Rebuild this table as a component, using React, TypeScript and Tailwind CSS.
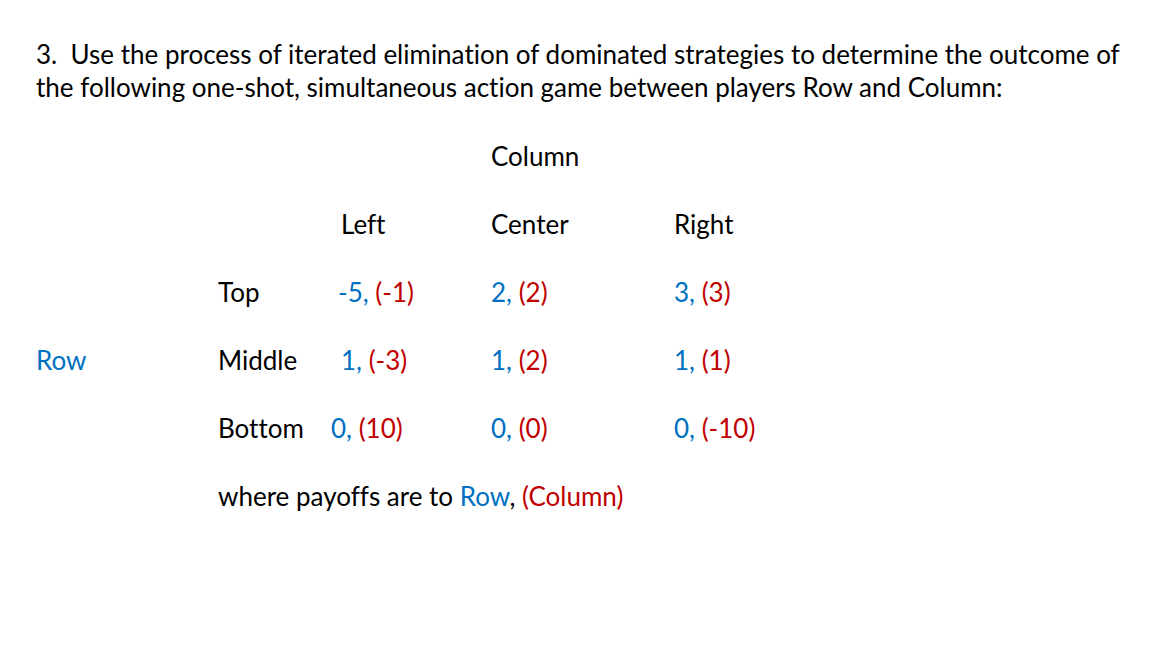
import React from 'react';

const Blue: React.FC<{ children: React.ReactNode }> = ({ children }) => (
  <span className="text-[#0070c0]">{children}</span>
);
const Red: React.FC<{ children: React.ReactNode }> = ({ children }) => (
  <span className="text-[#c00000]">{children}</span>
);

const Payoff: React.FC<{ row: string; col: string; className?: string }> = ({ row, col, className }) => (
  <div className={className}>
    <Blue>{row},</Blue> <Red>({col})</Red>
  </div>
);

const App: React.FC = () => {
  return (
    <div
      className="w-[1150px] h-[652px] bg-white text-black overflow-hidden text-[26px] [font-variant-ligatures:none]"
      style={{ fontFamily: 'Lato, "Open Sans", sans-serif' }}
    >
      {/* Question */}
      <div className="pl-[36px] pt-[38px] leading-[33px]">
        <p>3.&nbsp; Use the process of iterated elimination of dominated strategies to determine the outcome of</p>
        <p>the following one-shot, simultaneous action game between players Row and Column:</p>
      </div>

      {/* Game matrix */}
      <div className="mt-[18px] pl-[36px] grid grid-cols-[182px_120px_153px_183px_1fr] auto-rows-[68px] items-center">
        <div />
        <div />
        <div />
        <div>Column</div>
        <div />

        <div />
        <div />
        <div className="pl-[3px]">Left</div>
        <div>Center</div>
        <div>Right</div>

        <div />
        <div>Top</div>
        <Payoff row="-5" col="-1" />
        <Payoff row="2" col="2" />
        <Payoff row="3" col="3" />

        <div><Blue>Row</Blue></div>
        <div>Middle</div>
        <Payoff row="1" col="-3" className="pl-[3px]" />
        <Payoff row="1" col="2" />
        <Payoff row="1" col="1" />

        <div />
        <div>Bottom</div>
        <Payoff row="0" col="10" className="-ml-[7px]" />
        <Payoff row="0" col="0" />
        <Payoff row="0" col="-10" />

        <div />
        <div className="col-span-4 whitespace-nowrap">
          where payoffs are to <Blue>Row</Blue>, <Red>(Column)</Red>
        </div>
      </div>
    </div>
  );
};

export default App;
